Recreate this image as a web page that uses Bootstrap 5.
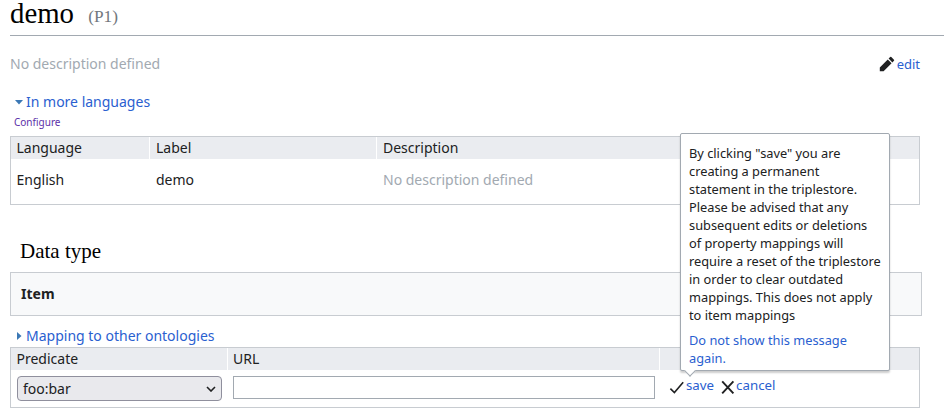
<!DOCTYPE html>
<html lang="en">
<head>
<meta charset="utf-8">
<title>demo (P1)</title>
<link rel="stylesheet" href="https://cdn.jsdelivr.net/npm/bootstrap@5.3.0/dist/css/bootstrap.min.css">
<style>
html,body{height:413px;overflow:hidden}
body{font-family:"Noto Sans",sans-serif;font-size:14px;line-height:22px;color:#202122;background:#fff;position:relative}
a{color:#2a60d0;text-decoration:none}
.page-title{font-family:"Liberation Serif",serif;font-size:28.8px;line-height:26px;color:#000;font-weight:400;margin:0 0 0 10px;height:31px}
.page-title span{font-size:17.3px;color:#72777d;margin-left:7px;vertical-align:1px}
.title-rule{margin:4px 0 0 10px;height:1px;background:#a2a9b1}
.desc-row{margin:17px 24px 0 10px;height:22px}
.muted-txt{color:#a2a9b1}
.pen-link{font-size:13px}
.pen-link svg{width:16px;height:16px;margin-right:2px}
.tog{margin:16px 0 0 15px;height:22px}
.tog svg{width:8px;height:8px;margin-right:3px;vertical-align:1px}
.cfg-link{font-size:10px;line-height:14px;margin:2px 0 0 14px;height:14px;display:block;color:#5b2fa8}
.lang-tbl,.map-tbl{margin:7px 0 0 10px;width:910px;border:1px solid #c8ccd1;table-layout:fixed;border-collapse:separate;border-spacing:0}
.lang-tbl th,.map-tbl th{background:#eaecf0;font-weight:400;padding:0 5px;height:22px;border-right:1px solid #fff}
.lang-tbl th,.lang-tbl td{padding-left:6px}
.lang-tbl th:first-child,.lang-tbl td:first-child,.map-tbl th:first-child{padding-left:5.5px}
.lang-tbl th:last-child,.map-tbl th:last-child{border-right:0}
.lang-tbl td{height:45px;padding-top:0;padding-bottom:3px}
.sub-head{font-family:"Liberation Serif",serif;font-size:21px;line-height:26px;color:#000;font-weight:400;margin:33px 0 0 20px;height:26px}
.type-box{margin:8px 0 0 10px;width:912px;height:44px;border:1px solid #c8ccd1;background:#f8f9fa;padding:0 10px;display:flex;align-items:center;font-weight:700}
.tog.second{margin:9px 0 0 15px}
.map-tbl{margin-top:0}
.map-tbl td{padding:0 5px;height:37px;vertical-align:top}
.pick{width:205px;height:25px;margin:6px 0 0 1px;background:#e9e9ed;border:1px solid #8f8f9d;border-radius:4px;padding:0 5px;font-size:14px;line-height:22px;display:flex;align-items:center;justify-content:space-between;color:#202122}
.url-in{width:422px;height:23px;margin:6px 0 0 0;border:1px solid #a2a9b1;background:#fff;display:block;padding:0 4px}
.acts{margin-top:4px;display:flex;align-items:center;margin-left:3px;font-size:13.3px}
.acts svg{width:16px;height:16px;margin:3px 2px 0 0}
.acts a+svg{margin:3px 1px 0 5px}
.tip-box{position:absolute;left:680px;top:133px;width:210px;height:238px;background:#fff;border:1px solid #a2a9b1;border-radius:2px;box-shadow:0 2px 2px rgba(0,0,0,.2);padding:10px 7px 11px 8px;font-size:12.8px;line-height:18px;color:#202122}
.tip-box p{margin:0 0 7px}
.tip-box::after{content:"";position:absolute;left:5px;bottom:-5px;width:8px;height:8px;background:#fff;border-right:1px solid #a2a9b1;border-bottom:1px solid #a2a9b1;transform:rotate(45deg)}
</style>
</head>
<body>
<h1 class="page-title">demo <span>(P1)</span></h1>
<div class="title-rule"></div>
<div class="desc-row d-flex justify-content-between">
  <span class="muted-txt">No description defined</span>
  <a href="#" class="pen-link d-flex align-items-center"><svg viewBox="0 0 20 20"><path fill="#202122" d="M16.77 8l1.94-2a1 1 0 0 0 0-1.41l-3.34-3.3a1 1 0 0 0-1.41 0L12 3.23zM1 14.25V19h4.75l9.96-9.96-4.75-4.75z"/></svg>edit</a>
</div>
<div class="tog"><a href="#"><svg viewBox="0 0 8 8"><path fill="#3b78b5" d="M0 2h8L4 6.5z"/></svg>In more languages</a></div>
<a href="#" class="cfg-link">Configure</a>
<table class="lang-tbl">
  <colgroup><col style="width:139px"><col style="width:227px"><col></colgroup>
  <tr><th>Language</th><th>Label</th><th>Description</th></tr>
  <tr><td>English</td><td>demo</td><td class="muted-txt">No description defined</td></tr>
</table>
<h2 class="sub-head">Data type</h2>
<div class="type-box">Item</div>
<div class="tog second"><a href="#"><svg viewBox="0 0 8 8"><path fill="#3b78b5" d="M2 0v8l4.5-4z"/></svg>Mapping to other ontologies</a></div>
<table class="map-tbl">
  <colgroup><col style="width:217px"><col style="width:432px"><col></colgroup>
  <tr><th>Predicate</th><th>URL</th><th></th></tr>
  <tr>
    <td><div class="pick">foo:bar<svg width="10" height="6" viewBox="0 0 10 6"><path fill="none" stroke="#202122" stroke-width="1.6" d="M1 1l4 4 4-4"/></svg></div></td>
    <td><input class="url-in" type="text" aria-label="URL"></td>
    <td><div class="acts">
      <svg viewBox="0 0 20 20"><path fill="none" stroke="#202122" stroke-width="2" d="M3 12l5 5L19 4"/></svg><a href="#">save</a>
      <svg viewBox="0 0 20 20"><path fill="none" stroke="#202122" stroke-width="2.4" d="M4 3l14 15M18 3L4 18"/></svg><a href="#">cancel</a>
    </div></td>
  </tr>
</table>
<div class="tip-box">
  <p>By clicking "save" you are creating a permanent statement in the triplestore. Please be advised that any subsequent edits or deletions of property mappings will require a reset of the triplestore in order to clear outdated mappings. This does not apply to item mappings</p>
  <a href="#">Do not show this message again.</a>
</div>
<script src="https://cdn.jsdelivr.net/npm/bootstrap@5.3.0/dist/js/bootstrap.bundle.min.js"></script>
</body>
</html>
